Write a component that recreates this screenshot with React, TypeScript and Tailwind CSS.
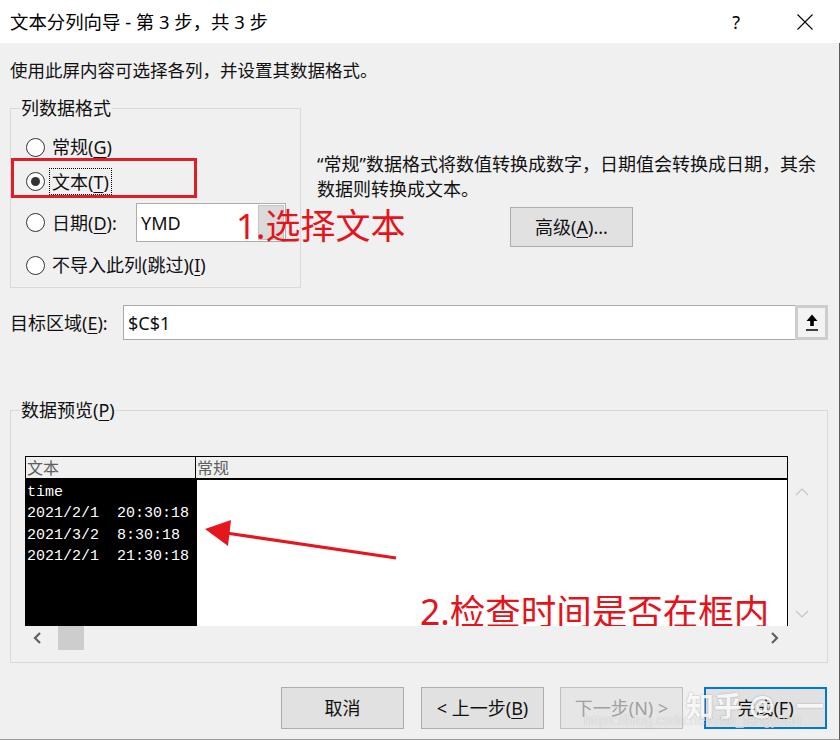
import React from 'react'

function Radio({ checked }: { checked?: boolean }) {
  return (
    <span className="w-[19px] h-[19px] rounded-full border border-[#333] bg-white flex items-center justify-center shrink-0">
      {checked && <span className="w-[9px] h-[9px] rounded-full bg-[#333]" />}
    </span>
  )
}

function Key({ k }: { k: string }) {
  return <span className="underline underline-offset-[3px] decoration-1">{k}</span>
}

function Chevron({ dir, className }: { dir: 'left' | 'right' | 'up' | 'down'; className?: string }) {
  const d = {
    left: 'M7 1 L2 6 L7 11',
    right: 'M2 1 L7 6 L2 11',
    up: 'M1 7 L7 1 L13 7',
    down: 'M1 1 L7 7 L13 1',
  }[dir]
  const vb = dir === 'up' || dir === 'down' ? '0 0 14 8' : '0 0 9 12'
  return (
    <svg viewBox={vb} className={className} fill="none">
      <path d={d} stroke="currentColor" strokeWidth={dir === 'up' || dir === 'down' ? 1.2 : 2.2} />
    </svg>
  )
}

function Btn({ children, disabled, primary }: { children: React.ReactNode; disabled?: boolean; primary?: boolean }) {
  return (
    <div
      className={`w-[123px] h-[42px] bg-[#e1e1e1] flex items-center justify-center text-[18px] leading-[24px] ${
        primary ? 'border-2 border-[#0078d7]' : 'border border-[#adadad]'
      } ${disabled ? 'text-[#a0a0a0] border-[#bfbfbf] bg-[#e6e6e6]' : 'text-[#111]'}`}
    >
      {children}
    </div>
  )
}

export default function App() {
  return (
    <div className="w-[840px] h-[740px] relative overflow-hidden bg-[#f0f0f0] text-[#111] font-['Noto_Sans','Noto_Sans_CJK_SC',sans-serif]">
      {/* title bar */}
      <div className="h-[43px] bg-white flex items-center pl-[10px]">
        <span className="text-[18.4px] leading-[24px] text-black">文本分列向导 - 第 3 步，共 3 步</span>
        <span className="ml-auto text-[18px] leading-[24px] text-black">?</span>
        <svg viewBox="0 0 16 16" className="w-[16px] h-[16px] ml-[57px] mr-[27px]">
          <path d="M0.5 0.5 L15.5 15.5 M15.5 0.5 L0.5 15.5" stroke="#000" strokeWidth="1.1" />
        </svg>
      </div>

      <div className="h-[697px] border-r border-[#5c5c5c] border-b border-b-[#9a9a9a]">
        <div className="pt-[15px] pl-[10px] text-[17.5px] leading-[24px]">使用此屏内容可选择各列，并设置其数据格式。</div>

        {/* top section */}
        <div className="flex mt-[26px] ml-[10px]">
          <div className="relative w-[291px] h-[180px] border border-[#d9d9d9] pl-[15px]">
            <span className="absolute -top-[13px] left-[9px] px-[1px] bg-[#f0f0f0] text-[18px] leading-[24px]">列数据格式</span>
            <div className="flex items-center h-[24px] mt-[26px] text-[18px] leading-[24px]">
              <Radio />
              <span className="ml-[7px]">常规(<Key k="G" />)</span>
            </div>
            <div className="flex items-center h-[27px] mt-[9px] text-[18px] leading-[24px]">
              <Radio checked />
              <span className="ml-[4px] h-[27px] border border-dotted border-black px-[2px] flex items-center">文本(<Key k="T" />)</span>
            </div>
            <div className="flex items-center h-[39px] mt-[8px] text-[18px] leading-[24px]">
              <Radio />
              <span className="ml-[7px] w-[84px]">日期(<Key k="D" />):</span>
              <div className="w-[150px] h-[39px] bg-white border border-[#acacac] flex items-center">
                <span className="pl-[4px]">YMD</span>
                <div className="ml-auto mr-[1px] w-[26px] h-[35px] bg-[#dadada] border border-[#c4c4c4]" />
              </div>
            </div>
            <div className="flex items-center h-[24px] mt-[11px] text-[18px] leading-[24px]">
              <Radio />
              <span className="ml-[7px]">不导入此列(跳过)(<Key k="I" />)</span>
            </div>
          </div>

          <div className="ml-[16px] pt-[44px]">
            <div className="text-[18px] leading-[25px] whitespace-nowrap">
              “常规”数据格式将数值转换成数字，日期值会转换成日期，其余
              <br />
              数据则转换成文本。
            </div>
            <div className="ml-[193px] mt-[5px] w-[123px] h-[40px] bg-[#e1e1e1] border border-[#adadad] flex items-center justify-center text-[18px] leading-[24px]">
              高级(<Key k="A" />)...
            </div>
          </div>
        </div>

        {/* target */}
        <div className="flex items-center mt-[17px] pl-[10px]">
          <span className="w-[113px] text-[18px] leading-[24px]">目标区域(<Key k="E" />):</span>
          <div className="w-[705px] h-[35px] bg-white border border-[#a9a9a9] flex items-center">
            <span className="pl-[4px] text-[18px] leading-[24px]">$C$1</span>
            <div className="ml-auto h-[35px] -my-px -mr-px w-[33px] bg-[#f3f3f3] border-[3px] border-[#cdcdcd] flex items-center justify-center">
              <svg viewBox="0 0 14 18" className="w-[14px] h-[18px]">
                <path d="M7 0.5 L12.5 7 L8.8 7 L8.8 12 L5.2 12 L5.2 7 L1.5 7 Z" fill="#000" />
                <path d="M1 16 L13 16" stroke="#000" strokeWidth="1.5" />
              </svg>
            </div>
          </div>
        </div>

        {/* preview */}
        <div className="relative mt-[70px] ml-[10px] w-[818px] h-[253px] border border-[#d9d9d9] pt-[45px] pl-[14px] flex">
          <span className="absolute -top-[13px] left-[9px] px-[1px] bg-[#f0f0f0] text-[18px] leading-[24px]">数据预览(<Key k="P" />)</span>
          <div className="w-[763px]">
            <div className="border-t border-l border-r border-black">
              <div className="flex h-[23px] bg-[#f0f0f0] border-b-2 border-black text-[16px] leading-[22px] text-[#5e5e5e]">
                <div className="w-[170px] border-r border-black pl-[1px]">文本</div>
                <div className="pl-[1px]">常规</div>
              </div>
              <div className="flex h-[146px]">
                <div className="w-[171px] bg-black border-r border-black pl-[1px] pt-[2px] font-['Liberation_Mono',monospace] text-[15px] leading-[21.3px] text-white whitespace-pre">
                  <div>time</div>
                  <div>2021/2/1  20:30:18</div>
                  <div>2021/3/2  8:30:18</div>
                  <div>2021/2/1  21:30:18</div>
                </div>
                <div className="flex-1 bg-white relative overflow-hidden">
                  <span className="absolute left-[223px] top-[113px] whitespace-nowrap text-[35.5px] leading-[36px] text-[#e3141c]">2.检查时间是否在框内</span>
                </div>
              </div>
            </div>
            <div className="flex items-center h-[24px] text-[#606060]">
              <Chevron dir="left" className="ml-[8px] w-[9px] h-[12px]" />
              <div className="ml-[16px] w-[26px] h-[24px] bg-[#cdcdcd]" />
              <Chevron dir="right" className="ml-auto mr-[9px] w-[9px] h-[12px]" />
            </div>
          </div>
          <div className="w-[28px] h-[170px] flex flex-col items-center justify-between pt-[32px] pb-[8px] text-[#c6c6c6]">
            <Chevron dir="up" className="w-[14px] h-[8px]" />
            <Chevron dir="down" className="w-[14px] h-[8px]" />
          </div>
        </div>

        {/* buttons */}
        <div className="flex mt-[24px] pl-[281px]">
          <Btn>取消</Btn>
          <div className="ml-[17px]">
            <Btn>&lt; 上一步(<Key k="B" />)</Btn>
          </div>
          <div className="ml-[16px]">
            <Btn disabled>下一步(N) &gt;</Btn>
          </div>
          <div className="ml-[21px]">
            <Btn primary>完成(<Key k="F" />)</Btn>
          </div>
        </div>
      </div>

      {/* annotations */}
      <div className="absolute left-[11px] top-[158px] w-[186px] h-[40px] border-[3px] border-[#df1f27]" />
      <span className="absolute left-[236px] top-[208px] text-[35px] leading-[35px] text-[#e3141c] whitespace-nowrap">1.选择文本</span>
      <svg className="absolute left-0 top-0 w-[840px] h-[740px] pointer-events-none" viewBox="0 0 840 740">
        <path d="M396 558 L226 533" stroke="#e5161e" strokeWidth="3.2" />
        <path d="M205 529 L231 520 L228 546 Z" fill="#e5161e" />
      </svg>

      {/* watermark */}
      <span className="absolute left-[686px] top-[690px] text-[28px] leading-[32px] text-white/90 font-bold [text-shadow:0_0_2px_rgba(0,0,0,0.3)] whitespace-nowrap">知乎 @</span>
      <span className="absolute left-[796px] top-[690px] text-[28px] leading-[32px] text-white/90 font-bold [text-shadow:0_0_2px_rgba(0,0,0,0.3)]">一</span>
      <span className="absolute left-[584px] top-[711px] text-[14px] leading-[18px] text-white/70 font-['Liberation_Sans',sans-serif] [text-shadow:0_0_1px_rgba(0,0,0,0.25)] whitespace-nowrap">https://blog.csdn.net/zhu_fangyuan</span>
    </div>
  )
}
